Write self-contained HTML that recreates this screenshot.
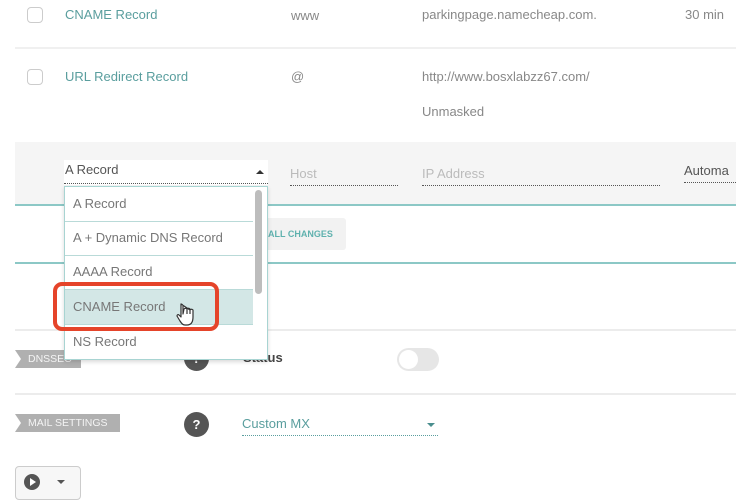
<!DOCTYPE html>
<html><head><meta charset="utf-8"><style>
*{margin:0;padding:0;box-sizing:border-box}
body{width:736px;height:504px;background:#fff;font-family:"Liberation Sans",sans-serif;position:relative;overflow:hidden;color:#777}
.a{position:absolute;white-space:nowrap}
.t{color:#5a9e9e;font-size:13px}
.g{color:#888;font-size:13px}
.cb{position:absolute;width:16px;height:16px;border:1px solid #ccc;border-radius:4px;background:#fff}
.dot{border-bottom:1px dotted #555}
.item{position:absolute;left:0;width:188px;height:35px;border-bottom:1px solid #b9dad8;padding:9px 0 0 8px;font-size:13px;color:#777;white-space:nowrap}
.tag{position:absolute;background:#b0b0b0;color:#f4f4f4;font-size:10.5px;height:18px;padding:3px 0 0 13px;white-space:nowrap;overflow:hidden}
.tag:before{content:"";position:absolute;left:0;top:0;border-left:6px solid #fff;border-top:9px solid transparent;border-bottom:9px solid transparent}
.q{position:absolute;width:25px;height:25px;border-radius:50%;background:#555;color:#fff;font-size:13px;font-weight:bold;text-align:center;line-height:25px}
</style></head><body>
<div class="cb" style="left:27px;top:7px"></div>
<div class="a t" style="left:65px;top:7px">CNAME Record</div>
<div class="a g" style="left:291px;top:8px">www</div>
<div class="a g" style="left:422px;top:7px">parkingpage.namecheap.com.</div>
<div class="a g" style="left:685px;top:7px">30 min</div>
<div class="a" style="left:15px;top:47px;width:721px;height:2px;background:#f0f0f0"></div>
<div class="cb" style="left:27px;top:69px"></div>
<div class="a t" style="left:65px;top:69px">URL Redirect Record</div>
<div class="a g" style="left:291px;top:69px">@</div>
<div class="a g" style="left:422px;top:69px">http://www.bosxlabzz67.com/</div>
<div class="a g" style="left:422px;top:104px">Unmasked</div>

<div class="a" style="left:15px;top:142px;width:721px;height:63px;background:#f5f5f5"></div>
<div class="a" style="left:64px;top:160px;width:204px;height:25px;background:#fff"></div>
<div class="a dot" style="left:64px;top:162px;width:204px;height:22px;font-size:13px;color:#555;padding-left:1px">A Record</div>
<div class="a" style="left:256px;top:170px;border-left:4px solid transparent;border-right:4px solid transparent;border-bottom:4px solid #333"></div>
<div class="a dot" style="left:290px;top:166px;width:108px;height:20px;font-size:13px;color:#bbb">Host</div>
<div class="a dot" style="left:422px;top:166px;width:238px;height:20px;font-size:13px;color:#bbb">IP Address</div>
<div class="a dot" style="left:684px;top:163px;width:60px;height:20px;font-size:13px;color:#555">Automa</div>
<div class="a" style="left:15px;top:204px;width:721px;height:2px;background:#8cc8c6"></div>

<div class="a" style="left:230px;top:218px;width:116px;height:32px;background:#f2f2f2;border-radius:3px;color:#5fb1ae;font-size:9px;font-weight:bold;padding:11px 0 0 38px">ALL CHANGES</div>
<div class="a" style="left:15px;top:262px;width:721px;height:2px;background:#8cc8c6"></div>
<div class="a" style="left:15px;top:329px;width:721px;height:2px;background:#ececec"></div>

<div class="tag" style="left:15px;top:350px;width:66px">DNSSEC</div>
<div class="q" style="left:184px;top:346px">?</div>
<div class="a" style="left:243px;top:350px;font-size:13px;color:#444;font-weight:bold">Status</div>
<div class="a" style="left:397px;top:348px;width:42px;height:23px;border-radius:12px;background:#e6e6e6"></div>
<div class="a" style="left:399px;top:350px;width:19px;height:19px;border-radius:50%;background:#fff"></div>
<div class="a" style="left:15px;top:393px;width:721px;height:2px;background:#ececec"></div>

<div class="tag" style="left:15px;top:414px;width:105px">MAIL SETTINGS</div>
<div class="q" style="left:184px;top:412px">?</div>
<div class="a t dot" style="left:242px;top:416px;width:196px;height:20px;border-bottom-color:#5a9e9e;font-size:13px">Custom MX</div>
<div class="a" style="left:427px;top:423px;border-left:4px solid transparent;border-right:4px solid transparent;border-top:4px solid #4a8e8e"></div>

<div class="a" style="left:15px;top:466px;width:66px;height:34px;border:1px solid #ccc;border-radius:4px;background:#f7f7f7"></div>
<div class="a" style="left:24px;top:474px;width:16px;height:16px;border-radius:50%;background:#555"></div>
<div class="a" style="left:30px;top:478px;border-top:4px solid transparent;border-bottom:4px solid transparent;border-left:6px solid #fff"></div>
<div class="a" style="left:57px;top:480px;border-left:4px solid transparent;border-right:4px solid transparent;border-top:4px solid #555"></div>

<div class="a" style="left:64px;top:186px;width:204px;height:174px;background:#fff;border:1px solid #a8d4d2;box-shadow:0 2px 4px rgba(0,0,0,.15)">
 <div class="item" style="top:0">A Record</div>
 <div class="item" style="top:34px">A + Dynamic DNS Record</div>
 <div class="item" style="top:68px">AAAA Record</div>
 <div class="item" style="top:103px;background:#d3e7e6">CNAME Record</div>
 <div class="item" style="top:138px;border:none">NS Record</div>
 <div class="a" style="left:190px;top:3px;width:7px;height:104px;border-radius:4px;background:#bdbdbd"></div>
</div>
<div class="a" style="left:53px;top:282px;width:166px;height:49px;border:4px solid #e5442a;border-radius:9px"></div>
<svg class="a" style="left:176px;top:302px" width="22" height="26" viewBox="0 0 22 26"><path d="M5 2c1 0 2 1 2 2v8l1-5c1-1 2-1 3 0v5 M11 7c1-1 2-1 3 0v5 M14 8c1-1 2-1 3 0v7c0 5-2 8-6 8H9c-2 0-3-1-5-4L1 14c0-1 1-2 2-1l2 2V4c0-1 0-2 0-2z" fill="#fff" stroke="#333" stroke-width="1.2" stroke-linejoin="round"/></svg>
</body></html>
